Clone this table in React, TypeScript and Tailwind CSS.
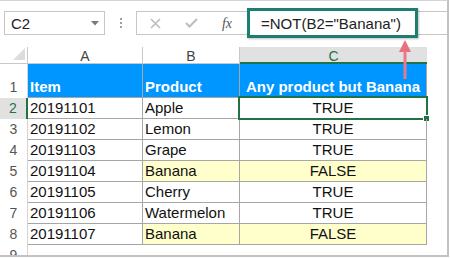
const rows = [
  { n: 2, item: "20191101", product: "Apple", result: "TRUE", hit: false },
  { n: 3, item: "20191102", product: "Lemon", result: "TRUE", hit: false },
  { n: 4, item: "20191103", product: "Grape", result: "TRUE", hit: false },
  { n: 5, item: "20191104", product: "Banana", result: "FALSE", hit: true },
  { n: 6, item: "20191105", product: "Cherry", result: "TRUE", hit: false },
  { n: 7, item: "20191106", product: "Watermelon", result: "TRUE", hit: false },
  { n: 8, item: "20191107", product: "Banana", result: "FALSE", hit: true },
];

function DataRow({ n, item, product, result, hit }: (typeof rows)[number]) {
  const active = n === 2;
  return (
    <div className="flex h-[21px] shrink-0 text-[15px] leading-[20px] text-[#111]">
      <div
        className={
          active
            ? "w-[28px] shrink-0 border-r-2 border-[#217346] bg-[#e1e1e1] text-center text-[14px] text-[#217346]"
            : "w-[28px] shrink-0 border-r border-[#d4d4d4] text-center text-[14px] text-[#555]"
        }
      >
        {n}
      </div>
      <div className="w-[115px] shrink-0 border-r border-b border-[#a6a6a6] pl-[2px]">{item}</div>
      <div className={`w-[97px] shrink-0 border-r border-b border-[#a6a6a6] pl-[2px] ${hit ? "bg-[#ffffcc]" : ""}`}>
        {product}
      </div>
      <div
        className={`relative w-[187px] shrink-0 border-r border-b border-[#a6a6a6] text-center ${hit ? "bg-[#ffffcc]" : ""}`}
      >
        {result}
        {active && (
          <>
            <div className="absolute -inset-[2px] border-2 border-[#217346]" />
            <div className="absolute left-[183px] top-[17px] h-[7px] w-[7px] border border-white bg-[#217346]" />
          </>
        )}
      </div>
    </div>
  );
}

export default function App() {
  return (
    <div className="h-[258px] w-[450px] overflow-hidden bg-white font-['Liberation_Sans',Arial,sans-serif]">
      <div className="relative flex h-[257px] w-[449px] flex-col overflow-hidden border-t border-r-2 border-b-2 border-t-[#d4d4d4] border-r-[#c2c2c2] border-b-[#c2c2c2]">
        {/* formula bar */}
        <div className="flex h-[46px] shrink-0 items-start pt-[10px] pl-[4px]">
          <div className="flex h-[24px] w-[101px] items-center justify-between border border-[#c6c6c6] pt-[1px] pl-[6px] pr-[5px] text-[15px] leading-[22px] text-[#222]">
            <span>C2</span>
            <svg width="8" height="5" viewBox="0 0 8 5">
              <path d="M0 0h8L4 4.5z" fill="#7a7a7a" />
            </svg>
          </div>
          <div className="flex h-[24px] w-[31px] flex-col items-center justify-center gap-[2px]">
            <span className="h-[2px] w-[2px] bg-[#a0a0a0]" />
            <span className="h-[2px] w-[2px] bg-[#a0a0a0]" />
            <span className="h-[2px] w-[2px] bg-[#a0a0a0]" />
          </div>
          <div className="flex h-[24px] flex-1 items-center border border-r-0 border-[#c6c6c6]">
            <div className="flex w-[110px] shrink-0 items-center">
              <span className="flex w-[36px] justify-center">
                <svg width="11" height="11" viewBox="0 0 11 11">
                  <path d="M1 1l9 9M10 1l-9 9" stroke="#bdbdbd" strokeWidth="1.6" />
                </svg>
              </span>
              <span className="flex w-[36px] justify-center">
                <svg width="13" height="10" viewBox="0 0 13 10">
                  <path d="M1 5l3.5 3.5L12 1" stroke="#bdbdbd" strokeWidth="2" fill="none" />
                </svg>
              </span>
              <span className="flex w-[36px] justify-center font-['Liberation_Serif',serif] text-[14px] italic text-[#555]">
                fx
              </span>
            </div>
            <div className="h-[30px] w-[171px] shrink-0 border-[3px] border-[#1d7d6e] bg-white pt-[1px] pl-[11px] text-[15px] leading-[23px] text-[#222] shadow-[1px_1px_2px_rgba(0,0,0,0.25)]">
              =NOT(B2="Banana")
            </div>
          </div>
        </div>

        {/* column headers */}
        <div className="flex h-[17px] shrink-0 text-[14px] leading-[14px]">
          <div className="relative w-[28px] shrink-0 border-r border-b border-[#c8c8c8]">
            <svg className="absolute left-[13px] top-[1px]" width="12" height="12" viewBox="0 0 12 12">
              <path d="M12 0v12H0z" fill="#dcdcdc" />
            </svg>
          </div>
          <div className="w-[115px] shrink-0 border-r border-b border-[#c8c8c8] pt-[2px] text-center text-[#444]">A</div>
          <div className="w-[97px] shrink-0 border-r border-b border-[#c8c8c8] pt-[2px] text-center text-[#444]">B</div>
          <div className="w-[187px] shrink-0 border-b-2 border-[#217346] bg-[#e1e1e1] pt-[2px] text-center text-[#217346]">
            C
          </div>
        </div>

        {/* header row */}
        <div className="flex h-[34px] shrink-0 text-[15px] leading-[20px] font-bold text-white">
          <div className="flex w-[28px] shrink-0 items-end justify-center border-r border-[#d4d4d4] pb-[1px] text-[14px] font-normal text-[#555]">
            1
          </div>
          <div className="flex w-[115px] shrink-0 items-end border-r border-b border-[#a6a6a6] bg-[#0096ff] pl-[2px]">Item</div>
          <div className="flex w-[97px] shrink-0 items-end border-r border-b border-[#a6a6a6] bg-[#0096ff] pl-[2px]">Product</div>
          <div className="flex w-[187px] shrink-0 items-end justify-center border-r border-b border-[#a6a6a6] bg-[#0096ff]">
            Any product but Banana
          </div>
        </div>

        {rows.map((r) => (
          <DataRow key={r.n} {...r} />
        ))}

        <div className="flex h-[21px] shrink-0 text-[14px] leading-[20px] text-[#555]">
          <div className="w-[28px] shrink-0 border-r border-[#d4d4d4] text-center">9</div>
        </div>

        {/* callout arrow */}
        <svg className="absolute left-[397px] top-[38px]" width="16" height="42" viewBox="0 0 16 42">
          <path d="M8 1L14 13H2z" fill="#e8707f" />
          <path d="M8 12v28" stroke="#e8788a" strokeWidth="3" />
        </svg>
      </div>
    </div>
  );
}
